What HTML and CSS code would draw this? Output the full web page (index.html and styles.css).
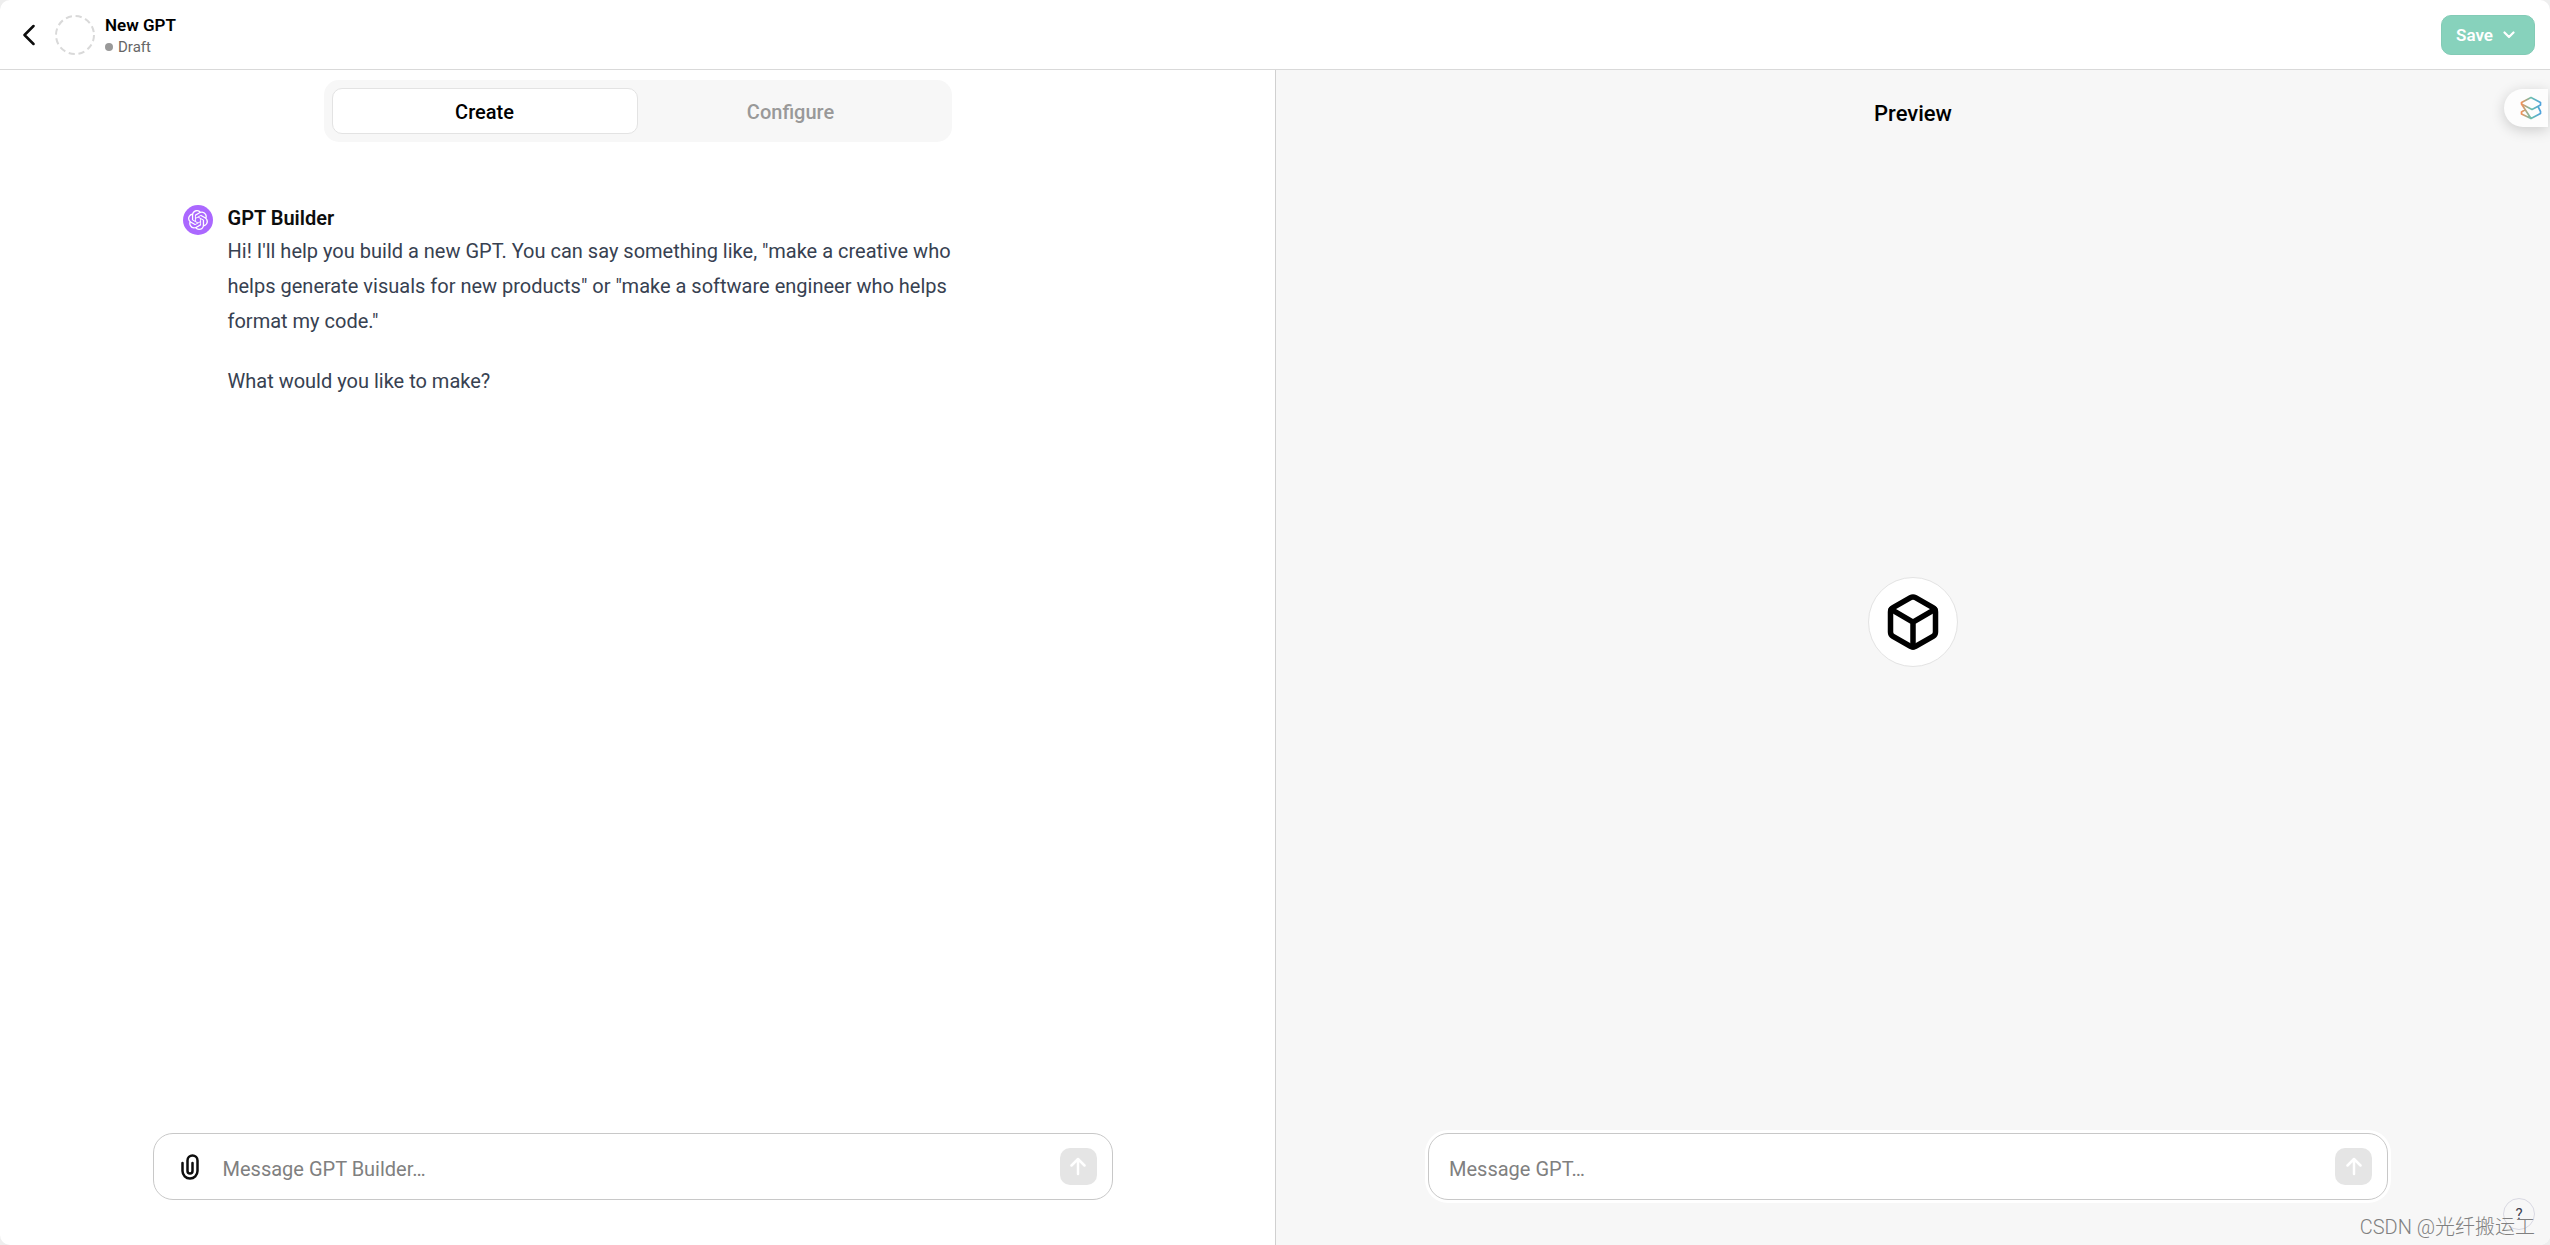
FILE: index.html
```
<!DOCTYPE html>
<html lang="en">
<head>
    <meta charset="UTF-8">
    <meta name="viewport" content="width=device-width, initial-scale=1.0">
    <title>New GPT</title>
    <link rel="stylesheet" href="styles.css">
</head>
<body>
    <div class="app">
        <!-- Top bar -->
        <header class="topbar">
            <button class="back-button" type="button" aria-label="Back">
                <svg width="13" height="22" viewBox="0 0 13 22" fill="none" stroke="currentColor" stroke-width="2.5" stroke-linecap="round" stroke-linejoin="round">
                    <path d="M11.500 2L2.500 11l9 9"/>
                </svg>
            </button>
            <svg class="gpt-avatar" width="40" height="40" viewBox="0 0 40 40" fill="none">
                <circle cx="20" cy="20" r="19" stroke="#d9d9d9" stroke-width="2" stroke-dasharray="6.2 3.75"/>
            </svg>
            <div class="gpt-info">
                <h1 class="gpt-name">New GPT</h1>
                <div class="gpt-status"><span class="status-dot"></span>Draft</div>
            </div>
            <button class="save-button" type="button">
                Save
                <svg width="12" height="8" viewBox="0 0 12 8" fill="none" stroke="currentColor" stroke-width="2.2" stroke-linecap="round" stroke-linejoin="round">
                    <path d="M1.500 1.500L6 6l4.500-4.500"/>
                </svg>
            </button>
        </header>

        <main class="workspace">
            <!-- Builder -->
            <section class="panel builder">
                <div class="tabs" role="tablist">
                    <button class="tab active" type="button" role="tab" aria-selected="true">Create</button>
                    <button class="tab" type="button" role="tab" aria-selected="false">Configure</button>
                </div>

                <div class="messages">
                    <article class="message">
                        <div class="message-avatar">
                            <svg width="20" height="20" viewBox="0 0 24 24" fill="currentColor">
                                <path d="M22.2819 9.8211a5.9847 5.9847 0 0 0-.5157-4.9108 6.0462 6.0462 0 0 0-6.5098-2.9A6.0651 6.0651 0 0 0 4.9807 4.1818a5.9847 5.9847 0 0 0-3.9977 2.9 6.0462 6.0462 0 0 0 .7427 7.0966 5.98 5.98 0 0 0 .511 4.9107 6.051 6.051 0 0 0 6.5146 2.9001A5.9847 5.9847 0 0 0 13.2599 24a6.0557 6.0557 0 0 0 5.7718-4.2058 5.9894 5.9894 0 0 0 3.9977-2.9001 6.0557 6.0557 0 0 0-.7475-7.073zm-9.022 12.6081a4.4755 4.4755 0 0 1-2.8764-1.0408l.1419-.0804 4.7783-2.7582a.7948.7948 0 0 0 .3927-.6813v-6.7369l2.02 1.1686a.071.071 0 0 1 .038.052v5.5826a4.504 4.504 0 0 1-4.4945 4.4944zm-9.6607-4.1254a4.4708 4.4708 0 0 1-.5346-3.0137l.142.0852 4.783 2.7582a.7712.7712 0 0 0 .7806 0l5.8428-3.3685v2.3324a.0804.0804 0 0 1-.0332.0615L9.74 19.9502a4.4992 4.4992 0 0 1-6.1408-1.6464zM2.3408 7.8956a4.485 4.485 0 0 1 2.3655-1.9728V11.6a.7664.7664 0 0 0 .3879.6765l5.8144 3.3543-2.0201 1.1685a.0757.0757 0 0 1-.071 0l-4.8303-2.7865A4.504 4.504 0 0 1 2.3408 7.872zm16.5963 3.8558L13.1038 8.364 15.1192 7.2a.0757.0757 0 0 1 .071 0l4.8303 2.7913a4.4944 4.4944 0 0 1-.6765 8.1042v-5.6772a.79.79 0 0 0-.407-.667zm2.0107-3.0231l-.142-.0852-4.7735-2.7818a.7759.7759 0 0 0-.7854 0L9.409 9.2297V6.8974a.0662.0662 0 0 1 .0284-.0615l4.8303-2.7866a4.4992 4.4992 0 0 1 6.6802 4.66zM8.3065 12.863l-2.02-1.1638a.0804.0804 0 0 1-.038-.0567V6.0742a4.4992 4.4992 0 0 1 7.3757-3.4537l-.142.0805L8.704 5.459a.7948.7948 0 0 0-.3927.6813zm1.0976-2.3654l2.602-1.4998 2.6069 1.4998v2.9994l-2.5974 1.4997-2.6067-1.4997Z"/>
                            </svg>
                        </div>
                        <div class="message-body">
                            <h2 class="message-author">GPT Builder</h2>
                            <p>Hi! I'll help you build a new GPT. You can say something like, "make a creative who helps generate visuals for new products" or "make a software engineer who helps format my code."</p>
                            <p>What would you like to make?</p>
                        </div>
                    </article>
                </div>

                <form class="composer">
                    <button class="attach-button" type="button" aria-label="Attach file">
                        <svg width="18" height="26" viewBox="0 0 18 26" fill="none" stroke="currentColor" stroke-width="2.5" stroke-linecap="round">
                            <path d="M1.500 9v8a7.500 7.500 0 0 0 15 0V6.500a5 5 0 0 0-10 0V17a2.500 2.500 0 0 0 5 0V9"/>
                        </svg>
                    </button>
                    <input class="composer-input" type="text" placeholder="Message GPT Builder…" aria-label="Message GPT Builder">
                    <button class="send-button" type="submit" aria-label="Send">
                        <svg width="16" height="19" viewBox="0 0 16 19" fill="none" stroke="currentColor" stroke-width="2.5" stroke-linecap="round" stroke-linejoin="round">
                            <path d="M8 17V2M1.500 8.500L8 2l6.500 6.500"/>
                        </svg>
                    </button>
                </form>
            </section>

            <!-- Preview -->
            <section class="panel preview">
                <h2 class="preview-title">Preview</h2>
                <div class="preview-stage">
                    <div class="preview-icon">
                        <svg width="60" height="60" viewBox="0 0 24 24" fill="none" stroke="currentColor" stroke-width="2.2" stroke-linecap="round" stroke-linejoin="round">
                            <path d="M21 16V8a2 2 0 0 0-1-1.730l-7-4a2 2 0 0 0-2 0l-7 4A2 2 0 0 0 3 8v8a2 2 0 0 0 1 1.730l7 4a2 2 0 0 0 2 0l7-4A2 2 0 0 0 21 16z"/>
                            <path d="M3.270 6.960L12 12.010l8.730-5.050M12 22V12"/>
                        </svg>
                    </div>
                </div>
                <form class="composer">
                    <input class="composer-input" type="text" placeholder="Message GPT…" aria-label="Message GPT">
                    <button class="send-button" type="submit" aria-label="Send">
                        <svg width="16" height="19" viewBox="0 0 16 19" fill="none" stroke="currentColor" stroke-width="2.5" stroke-linecap="round" stroke-linejoin="round">
                            <path d="M8 17V2M1.500 8.500L8 2l6.500 6.500"/>
                        </svg>
                    </button>
                </form>
            </section>
        </main>

        <!-- Floating items -->
        <button class="side-widget" type="button" aria-label="Open assistant">
            <svg width="22" height="24" viewBox="0 0 22 24" fill="none" stroke="url(#widget-gradient)" stroke-width="1.7" stroke-linejoin="round">
                <defs>
                    <linearGradient id="widget-gradient" x1="0" y1="0" x2="1" y2="0">
                        <stop offset="0" stop-color="#f0925a"/>
                        <stop offset="0.5" stop-color="#6bbfae"/>
                        <stop offset="1" stop-color="#4fa3dc"/>
                    </linearGradient>
                </defs>
                <path d="M1.500 6.500L11 1.500l9.500 5v2.500L12 13.500 1.500 8z"/>
                <path d="M1.500 8L11 22.500l9.500-5v-2l-2.500-5M5.500 13.500l-4 2.500v2l9.500 4.500"/>
            </svg>
        </button>
        <button class="help-button" type="button" aria-label="Help">?</button>
        <div class="watermark">CSDN @光纤搬运工</div>
    </div>
</body>
</html>
```
FILE: styles.css
```
* {
    margin: 0;
    padding: 0;
    box-sizing: border-box;
}

body {
    font-family: Roboto, 'Liberation Sans', 'Noto Sans CJK SC', sans-serif;
    background: #eeeeee;
    color: #0d0d0d;
}

button,
input {
    font: inherit;
    color: inherit;
    border: none;
    background: none;
}

button {
    cursor: pointer;
}

svg {
    display: block;
}

.app {
    position: relative;
    display: flex;
    flex-direction: column;
    height: 100vh;
    overflow: hidden;
    border-radius: 10px;
    background: #ffffff;
}

/* Top bar */
.topbar {
    display: flex;
    align-items: center;
    height: 70px;
    padding: 0 15px 0 22px;
    border-bottom: 1px solid #d9d9d9;
}

.back-button {
    margin-right: 20px;
}

.gpt-avatar {
    margin-right: 10px;
}

.gpt-info {
    flex: 1;
    padding-top: 1px;
}

.gpt-name {
    font-size: 17px;
    font-weight: 600;
    line-height: 24px;
    color: #000000;
}

.gpt-status {
    display: flex;
    align-items: center;
    gap: 5px;
    font-size: 15px;
    line-height: 20px;
    color: #666666;
}

.status-dot {
    width: 8px;
    height: 8px;
    border-radius: 50%;
    background: #999999;
}

.save-button {
    display: flex;
    align-items: center;
    gap: 10px;
    height: 40px;
    padding: 0 19px 0 14px;
    border: 1px solid #83cbb6;
    border-radius: 10px;
    background: #87d2bc;
    color: #ffffff;
    font-size: 17px;
    font-weight: 600;
}

/* Panels */
.workspace {
    flex: 1;
    display: grid;
    grid-template-columns: 1fr 1fr;
}

.panel {
    display: flex;
    flex-direction: column;
    align-items: center;
    padding: 10px 0 45px;
}

.preview {
    border-left: 1px solid #d0d0d0;
    background: #f7f7f7;
}

.tabs {
    display: grid;
    grid-template-columns: 1fr 1fr;
    width: 628px;
    padding: 8px;
    border-radius: 15px;
    background: #f7f7f7;
}

.tab {
    height: 46px;
    padding-top: 2px;
    border: 1px solid transparent;
    border-radius: 10px;
    color: #999999;
    font-size: 20px;
    font-weight: 500;
}

.tab.active {
    border-color: #e3e3e3;
    background: #ffffff;
    color: #000000;
}

/* Messages */
.messages {
    flex: 1;
    width: 910px;
    max-width: 100%;
    padding: 63px 140px 0 0;
}

.message {
    display: flex;
    gap: 15px;
}

.message-avatar {
    display: flex;
    flex-shrink: 0;
    align-items: center;
    justify-content: center;
    width: 30px;
    height: 30px;
    border-radius: 50%;
    background: #ab68ff;
    color: #ffffff;
}

.message-body {
    color: #374151;
    font-size: 20px;
    line-height: 35px;
}

.message-author {
    margin-bottom: 3px;
    color: #0d0d0d;
    font-size: 20px;
    font-weight: 600;
    line-height: 26px;
}

.message-body p + p {
    margin-top: 25px;
}

/* Composer */
.composer {
    display: flex;
    align-items: center;
    width: 960px;
    max-width: 100%;
    height: 67px;
    margin-right: 10px;
    padding: 0 15px 0 20px;
    border: 1px solid #c8c8c8;
    border-radius: 20px;
    background: #ffffff;
    box-shadow: 0 0 0 3px #ffffff;
}

.attach-button {
    margin: 0 24px 0 7px;
}

.composer-input {
    flex: 1;
    min-width: 0;
    height: 44px;
    padding-top: 4px;
    outline: none;
    font-size: 20px;
}

.composer-input::placeholder {
    color: #808080;
    opacity: 1;
}

.send-button {
    display: flex;
    align-items: center;
    justify-content: center;
    width: 37px;
    height: 37px;
    border-radius: 10px;
    background: #e5e5e5;
    color: #ffffff;
}

/* Preview */
.preview-title {
    padding-top: 19px;
    color: #000000;
    font-size: 22px;
    font-weight: 500;
    line-height: 30px;
}

.preview-stage {
    flex: 1;
    display: flex;
    align-items: center;
    justify-content: center;
    padding-bottom: 18px;
}

.preview-icon {
    display: flex;
    align-items: center;
    justify-content: center;
    width: 90px;
    height: 90px;
    border: 1px solid #e3e3e3;
    border-radius: 50%;
    background: #ffffff;
    color: #000000;
}

/* Floating items */
.side-widget {
    position: absolute;
    top: 89px;
    right: 2px;
    display: flex;
    align-items: center;
    width: 44px;
    height: 38px;
    padding-left: 16px;
    border-radius: 19px 0 0 19px;
    background: #fdfdfd;
    box-shadow: 0 3px 14px rgba(0, 0, 0, 0.18);
}

.help-button {
    position: absolute;
    right: 15px;
    bottom: 15px;
    width: 32px;
    height: 32px;
    border: 1px solid #d9d9e3;
    border-radius: 50%;
    color: #40414f;
    font-size: 15px;
}

.watermark {
    position: absolute;
    right: 15px;
    bottom: 4px;
    color: #808080;
    font-size: 20px;
    font-weight: 300;
    line-height: 28px;
    pointer-events: none;
}
```
